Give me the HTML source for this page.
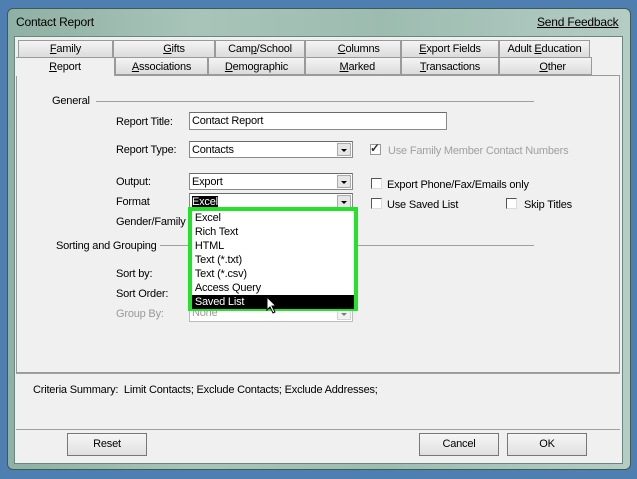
<!DOCTYPE html>
<html><head><style>
*{margin:0;padding:0;box-sizing:border-box}
body{width:637px;height:479px;overflow:hidden;background:#4f7fb0;font-family:"Liberation Sans",sans-serif;font-size:11px;color:#000;position:relative;letter-spacing:-0.2px}
.a{position:absolute}
.frame{left:7px;top:8px;width:624px;height:462px;background:linear-gradient(90deg,#8fb0a4,#a8c4b8 30%,#9dbcb0 60%,#b4ccc4);border:1px solid #3c5a58;border-radius:6px}
.client{left:14px;top:36px;width:609px;height:428px;background:#f0f0f0;border:1px solid #6a8680}
.tab{position:absolute;height:18px;background:linear-gradient(#f4f4f4,#dcdcdc);border:1px solid #9a9a9a;text-align:center;line-height:16px;font-size:11px}
.lbl{position:absolute;font-size:11px}
.in{position:absolute;background:#fff;border:1px solid #8a8a8a;border-top-color:#6a6a6a;height:17px;padding-left:2px;line-height:15px}
.dd{position:absolute;right:1px;top:1px;width:14px;height:13px;background:#e6e6e6;border:1px solid #aaa}
.dd:after{content:"";position:absolute;left:3px;top:5px;border:3px solid transparent;border-top:3px solid #000}
.cb{position:absolute;width:11px;height:11px;border:1px solid #555;border-right-color:#ddd;border-bottom-color:#ddd;background:#fff}
.btn{position:absolute;height:23px;border:1px solid #777;background:linear-gradient(#f6f6f6,#e0e0e0);text-align:center;line-height:21px}
.hr{position:absolute;height:1px;background:#a0a0a0}
u{text-decoration:underline}
</style></head><body>
<div class="a frame"></div>
<div class="a" style="left:16px;top:15px;font-size:12px">Contact Report</div>
<div class="a" style="left:537px;top:15px;font-size:12px;text-decoration:underline">Send Feedback</div>
<div class="a client"></div>
<div class="a" style="left:16px;top:75px;width:604px;height:298px;background:#f0f0f0;border:1px solid #9a9a9a"></div>
<div class="tab" style="left:18px;top:40px;width:95px"><u>F</u>amily</div>
<div class="tab" style="left:113px;top:40px;width:102px">&nbsp;&nbsp;&nbsp;&nbsp;&nbsp;&nbsp;&nbsp;<u>G</u>ifts</div>
<div class="tab" style="left:215px;top:40px;width:90px">Cam<u>p</u>/School</div>
<div class="tab" style="left:305px;top:40px;width:96px">&nbsp;&nbsp;&nbsp;&nbsp;<u>C</u>olumns</div>
<div class="tab" style="left:401px;top:40px;width:98px"><u>E</u>xport Fields</div>
<div class="tab" style="left:499px;top:40px;width:91px">Adult <u>E</u>ducation</div>
<div class="tab" style="left:16px;top:57px;width:99px;height:19px;background:#f0f0f0;border-bottom:none;border-left:none;line-height:18px"><u>R</u>eport</div>
<div class="tab" style="left:115px;top:57px;width:93px;line-height:19px"><u>A</u>ssociations</div>
<div class="tab" style="left:208px;top:57px;width:97px;line-height:19px"><u>D</u>emographic</div>
<div class="tab" style="left:305px;top:57px;width:96px;line-height:19px">&nbsp;&nbsp;&nbsp;<u>M</u>arked</div>
<div class="tab" style="left:401px;top:57px;width:98px;line-height:19px"><u>T</u>ransactions</div>
<div class="tab" style="left:499px;top:57px;width:93px;line-height:19px">&nbsp;&nbsp;&nbsp;&nbsp;&nbsp;<u>O</u>ther</div>

<div class="lbl" style="left:52px;top:95px">General</div>
<div class="hr" style="left:96px;top:101px;width:438px"></div>
<div class="lbl" style="left:116px;top:116px">Report Title:</div>
<div class="in" style="left:189px;top:112px;width:258px;height:18px;line-height:16px">Contact Report</div>
<div class="lbl" style="left:116px;top:144px">Report Type:</div>
<div class="in" style="left:189px;top:141px;width:164px;line-height:16px">Contacts<div class="dd"></div></div>
<div class="cb" style="left:370px;top:144px;border-color:#999"></div>
<div class="a" style="left:370px;top:141px;font-size:12px;color:#333;font-weight:bold">✓</div>
<div class="lbl" style="left:388px;top:145px;color:#a0a0a0">Use Family Member Contact Numbers</div>
<div class="lbl" style="left:116px;top:176px">Output:</div>
<div class="in" style="left:189px;top:173px;width:164px;line-height:16px">Export<div class="dd"></div></div>
<div class="cb" style="left:371px;top:178px"></div>
<div class="lbl" style="left:387px;top:179px">Export Phone/Fax/Emails only</div>
<div class="lbl" style="left:116px;top:196px">Format</div>
<div class="in" style="left:189px;top:193px;width:164px;line-height:16px"><span style="background:#000;color:#fff">Excel</span><div class="dd"></div></div>
<div class="cb" style="left:371px;top:198px"></div>
<div class="lbl" style="left:387px;top:199px">Use Saved List</div>
<div class="cb" style="left:506px;top:198px"></div>
<div class="lbl" style="left:524px;top:199px">Skip Titles</div>
<div class="lbl" style="left:116px;top:216px">Gender/Family</div>
<div class="lbl" style="left:56px;top:240px">Sorting and Grouping</div>
<div class="hr" style="left:160px;top:245px;width:30px"></div>
<div class="hr" style="left:358px;top:245px;width:176px"></div>
<div class="lbl" style="left:116px;top:268px">Sort by:</div>
<div class="lbl" style="left:116px;top:288px">Sort Order:</div>
<div class="lbl" style="left:116px;top:308px;color:#999">Group By:</div>
<div class="in" style="left:189px;top:305px;width:164px;color:#999;border-color:#bbb">None<div class="dd" style="opacity:.5"></div></div>
<div class="a" style="left:188px;top:207px;width:170px;height:104px;border:4px solid #22e22a;background:#fff"></div>
<div class="a" style="left:192px;top:211px;width:162px;line-height:14px;font-size:11px">
<div>&nbsp;Excel</div><div>&nbsp;Rich Text</div><div>&nbsp;HTML</div><div>&nbsp;Text (*.txt)</div><div>&nbsp;Text (*.csv)</div><div>&nbsp;Access Query</div><div style="background:#000;color:#fff">&nbsp;Saved List</div></div>
<svg class="a" style="left:266px;top:296px" width="12" height="18"><path d="M1 1 L1 14 L4 11 L7 17 L9 16 L6 10 L10 10 Z" fill="#fff" stroke="#000"/></svg>

<div class="hr" style="left:16px;top:373px;width:604px"></div>
<div class="lbl" style="left:33px;top:384px">Criteria Summary:&nbsp; Limit Contacts; Exclude Contacts; Exclude Addresses;</div>
<div class="hr" style="left:16px;top:429px;width:604px"></div>
<div class="btn" style="left:67px;top:433px;width:80px">Reset</div>
<div class="btn" style="left:419px;top:433px;width:80px">Cancel</div>
<div class="btn" style="left:507px;top:433px;width:80px">OK</div>
</body></html>
